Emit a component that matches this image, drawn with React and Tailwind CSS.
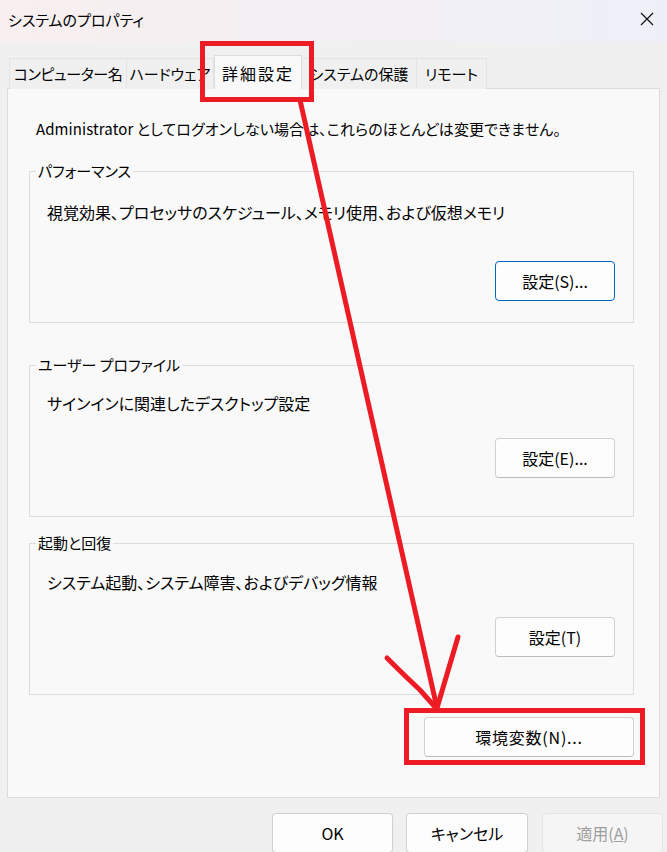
import React from "react";

const font = "font-['Noto_Sans_CJK_JP','Noto_Sans',sans-serif] [font-feature-settings:'palt']";

function Btn({ children, className = "", primary = false, disabled = false }) {
  return (
    <div
      className={
        "flex items-center justify-center rounded-[4px] border text-[16px] leading-[20px] " +
        (primary
          ? "border-[#0067c0] bg-[#fdfdfd] text-black "
          : disabled
          ? "border-[#e5e5e5] bg-[#f5f5f5] text-[#9d9d9d] "
          : "border-[#d0d0d0] border-b-[#bdbdbd] bg-[#fdfdfd] text-black ") +
        className
      }
    >
      {children}
    </div>
  );
}

function Tab({ label, w, selected, extra = "" }) {
  return (
    <div
      className={
        "flex items-center justify-center border border-b-0 text-[15px] leading-[20px] text-black " +
        (selected
          ? "h-[34px] border-[#dcdcdc] bg-[#f9f9f9] relative z-10 "
          : "h-[31px] border-[#e3e3e3] bg-[#f0f0f0] -ml-px first:ml-0 ") +
        extra
      }
      style={{ width: w }}
    >
      {label}
    </div>
  );
}

function Group({ label, desc, btn, primary, descMt, btnMt, pb }) {
  return (
    <fieldset className={"border border-[#dcdcdc] mx-0 px-0 " + pb}>
      <legend className="ml-[6px] px-[2px] text-[15px] leading-[20px] text-black">{label}</legend>
      <div className="pl-[17px] pr-[18px]">
        <div className={"text-[16px] leading-[20px] text-black " + descMt}>{desc}</div>
        <div className={"flex justify-end " + btnMt}>
          <Btn primary={primary} className="w-[120px] h-[40px]">{btn}</Btn>
        </div>
      </div>
    </fieldset>
  );
}

export default function App() {
  return (
    <div className={"relative w-[667px] h-[852px] overflow-hidden bg-[#f0f0f0] " + font}>
      {/* Title bar */}
      <div className="flex h-[42px] items-center justify-between bg-gradient-to-r from-[#f8efef] to-[#eef0f8] pl-[8px] pr-[10px]">
        <span className="text-[15px] leading-[20px] text-black -mt-[3px]">システムのプロパティ</span>
        <svg width="14" height="14" viewBox="0 0 14 14" className="mr-[3px] -mt-[4px]">
          <path d="M1 1 L13 13 M13 1 L1 13" stroke="#111" strokeWidth="1.2" fill="none" />
        </svg>
      </div>

      {/* Tabs */}
      <div className="flex items-end pl-[9px] pt-[13px] -mb-px relative z-10">
        <Tab label="コンピューター名" w={118} extra="tracking-[-0.4px]" />
        <Tab label="ハードウェア" w={88} />
        <Tab label="詳細設定" w={88} selected extra="tracking-[2px] text-[16px]" />
        <Tab label="システムの保護" w={116} />
        <Tab label="リモート" w={71} />
      </div>

      {/* Panel */}
      <div className="mx-[7px] h-[710px] border border-[#dcdcdc] bg-[#f9f9f9] pt-[30px] pl-[21px] pr-[25px]">
        <div className="ml-[7px] text-[15px] leading-[20px] text-black tracking-[0.1px]">
          Administrator としてログオンしない場合は、これらのほとんどは変更できません。
        </div>
        <div className="mt-[22px]">
          <Group
            label="パフォーマンス"
            desc="視覚効果、プロセッサのスケジュール、メモリ使用、および仮想メモリ"
            btn="設定(S)..."
            primary
            descMt="mt-[21px]"
            btnMt="mt-[39px]"
            pb="pb-[21px]"
          />
        </div>
        <div className="mt-[32px]">
          <Group
            label="ユーザー プロファイル"
            desc="サインインに関連したデスクトップ設定"
            btn="設定(E)..."
            descMt="mt-[18px]"
            btnMt="mt-[25px]"
            pb="pb-[38px]"
          />
        </div>
        <div className="mt-[16px]">
          <Group
            label="起動と回復"
            desc="システム起動、システム障害、およびデバッグ情報"
            btn="設定(T)"
            descMt="mt-[19px]"
            btnMt="mt-[25px]"
            pb="pb-[37px]"
          />
        </div>
        <div className="mt-[22px] flex justify-end">
          <Btn className="w-[210px] h-[40px] tracking-[0.8px]">環境変数(N)...</Btn>
        </div>
      </div>

      {/* Footer */}
      <div className="flex justify-end gap-[13px] pr-[4px] pt-[15px]">
        <Btn className="w-[121px] h-[40px]">OK</Btn>
        <Btn className="w-[122px] h-[40px]">キャンセル</Btn>
        <Btn disabled className="w-[121px] h-[40px] ml-px">
          <span>
            適用(<span className="underline">A</span>)
          </span>
        </Btn>
      </div>

      {/* Red annotations */}
      <svg
        className="pointer-events-none absolute left-0 top-0 z-20"
        width="667"
        height="852"
        viewBox="0 0 667 852"
      >
        <g stroke="#ed1c24" strokeWidth="5" fill="none">
          <rect x="202.5" y="43.5" width="109" height="56" />
          <rect x="406.5" y="710.5" width="236" height="52" />
        </g>
        <g stroke="#ed1c24" strokeWidth="5" fill="none" strokeLinecap="round">
          <path d="M300 100 L437 708" />
          <path d="M387 658 Q405 676 420 690 L436 708" />
          <path d="M458 637 L437 708" />
        </g>
      </svg>
    </div>
  );
}
